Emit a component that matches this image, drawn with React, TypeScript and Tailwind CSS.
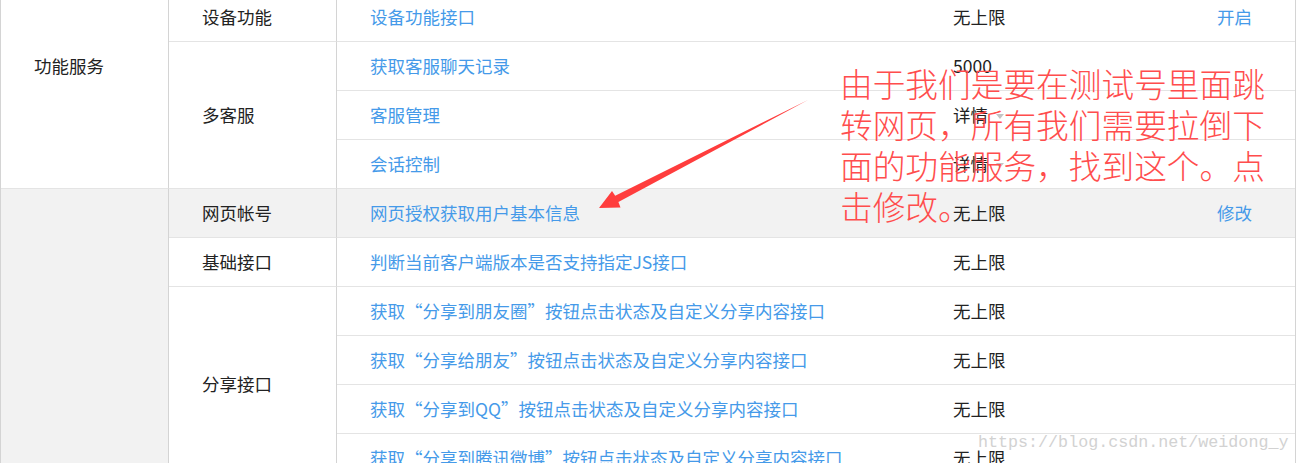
import React from "react"

const cjk = { fontFamily: '"Noto Sans CJK SC", "Noto Sans", sans-serif' }

interface Row {
  api: string
  limit?: string
  detail?: boolean
  action?: string
  active?: boolean
}

const cell = "flex items-center border-b border-[#e4e4e4] pl-[33px] whitespace-nowrap"
const sideCell = "flex items-center border-b border-r border-[#e4e4e4] border-r-[#d4d4d4] pl-[33px]"

function Cells({ row }: { row: Row }) {
  const bg = row.active ? "bg-[#f2f2f2]" : "bg-white"
  return (
    <>
      <div className={`${cell} ${bg} text-[#459ae9]`}>{row.api}</div>
      <div className={`${cell} ${bg} text-[#222]`}>
        {row.limit}
        {row.detail && (
          <span className="ml-[8px] mt-[2px] inline-block border-x-[4px] border-t-[5px] border-x-transparent border-t-[#c4c4c4]" />
        )}
      </div>
      <div className={`${cell} ${bg} text-[#459ae9]`}>{row.action}</div>
    </>
  )
}

export default function App() {
  return (
    <div className="relative h-[463px] w-[1299px] overflow-hidden bg-white text-[17.5px]" style={cjk}>
      <div className="-mt-[7px] grid w-[1296px] grid-cols-[168px_168px_583px_264px_111px] auto-rows-[49px] border-x border-[#d4d4d4]">
        <div className={`${sideCell} row-span-4 pb-[49px] text-[#222]`}>功能服务</div>
        <div className={`${sideCell} text-[#222]`}>设备功能</div>
        <Cells row={{ api: "设备功能接口", limit: "无上限", action: "开启" }} />

        <div className={`${sideCell} row-span-3 text-[#222]`}>多客服</div>
        <Cells row={{ api: "获取客服聊天记录", limit: "5000" }} />
        <Cells row={{ api: "客服管理", limit: "详情", detail: true }} />
        <Cells row={{ api: "会话控制", limit: "详情", detail: true }} />

        <div className={`${sideCell} row-span-6 bg-[#f2f2f2]`} />
        <div className={`${sideCell} bg-[#f2f2f2] text-[#222]`}>网页帐号</div>
        <Cells row={{ api: "网页授权获取用户基本信息", limit: "无上限", action: "修改", active: true }} />

        <div className={`${sideCell} text-[#222]`}>基础接口</div>
        <Cells row={{ api: "判断当前客户端版本是否支持指定JS接口", limit: "无上限" }} />

        <div className={`${sideCell} row-span-4 text-[#222]`}>分享接口</div>
        <Cells row={{ api: "获取“分享到朋友圈”按钮点击状态及自定义分享内容接口", limit: "无上限" }} />
        <Cells row={{ api: "获取“分享给朋友”按钮点击状态及自定义分享内容接口", limit: "无上限" }} />
        <Cells row={{ api: "获取“分享到QQ”按钮点击状态及自定义分享内容接口", limit: "无上限" }} />
        <Cells row={{ api: "获取“分享到腾讯微博”按钮点击状态及自定义分享内容接口", limit: "无上限" }} />
      </div>

      {/* annotation */}
      <svg className="pointer-events-none absolute left-0 top-0" width="1299" height="463">
        <polygon
          points="599,208 612,191 615.2,195.7 808,100 618.4,202 620.5,207.5"
          fill="#ff3d3d"
        />
      </svg>
      <div className="pointer-events-none absolute left-[840px] top-[62px] text-[32.7px] font-light leading-[41px] text-[#ff4d4d]">
        由于我们是要在测试号里面跳
        <br />
        转网页，所有我们需要拉倒下
        <br />
        面的功能服务，找到这个。点
        <br />
        击修改。
      </div>

      <div
        className="pointer-events-none absolute left-[978px] top-[433px] text-[16.7px] leading-[20px] text-[#d2d2d2]"
        style={{ fontFamily: '"Liberation Mono", monospace' }}
      >
        https://blog.csdn.net/weidong_y
      </div>
    </div>
  )
}
